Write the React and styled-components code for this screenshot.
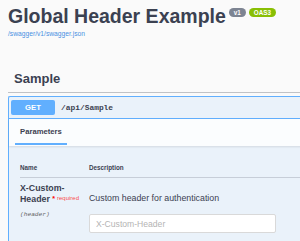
import styled, { createGlobalStyle } from "styled-components";

const GlobalStyle = createGlobalStyle`
    html, body {
        margin: 0;
        padding: 0;
        overflow: hidden;
        background: #fafafa;
        font-family: "Liberation Sans", Arial, sans-serif;
        color: #3b4151;
    }
`;

const Page = styled.div`
    width: 360px;
    padding: 0 0 0 8px;
    box-sizing: border-box;
`;

const Info = styled.div`
    padding-top: 6px;
    height: 60px;
    box-sizing: border-box;
`;

const Title = styled.h2`
    margin: 0;
    font-size: 19.5px;
    line-height: 20px;
    font-weight: 700;
    color: #3b4151;
    display: flex;
    align-items: flex-start;
`;

const Badge = styled.span`
    display: inline-block;
    margin: 2px 0 0 3px;
    padding: 0 5px;
    height: 9px;
    line-height: 9.5px;
    border-radius: 6px;
    font-size: 6.3px;
    font-weight: 700;
    color: #fff;
    background: ${p => p.$color};
`;

const Url = styled.a`
    display: block;
    margin-top: 4px;
    font-size: 6.7px;
    color: #4990e2;
    text-decoration: none;
`;

const TagHeading = styled.h3`
    margin: 0;
    padding: 10px 0 0 6px;
    height: 33px;
    box-sizing: border-box;
    font-size: 13px;
    line-height: 18px;
    font-weight: 700;
    color: #3b4151;
    border-bottom: 1px solid rgba(59, 65, 81, 0.3);
`;

const OpBlock = styled.div`
    margin-top: 3px;
    border: 1px solid #61affe;
    border-right: none;
    border-radius: 2px 0 0 2px;
    background: rgba(97, 175, 254, 0.1);
`;

const Summary = styled.div`
    display: flex;
    align-items: center;
    padding: 0 2px;
    height: 22px;
    box-sizing: border-box;
    border-bottom: 1px solid #61affe;
`;

const Method = styled.span`
    width: 44px;
    height: 15px;
    line-height: 15px;
    text-align: center;
    border-radius: 2px;
    background: #61affe;
    color: #fff;
    font-size: 7.7px;
    font-weight: 700;
`;

const Path = styled.span`
    padding-left: 6px;
    font-family: "Liberation Mono", monospace;
    font-size: 7.9px;
    font-weight: 700;
    color: #3b4151;
`;

const SectionHeader = styled.div`
    height: 27px;
    padding-left: 6px;
    box-sizing: border-box;
    display: flex;
    align-items: flex-end;
    background: rgba(255, 255, 255, 0.8);
    box-shadow: 0 1px 2px rgba(0, 0, 0, 0.1);
`;

const Tab = styled.div`
    padding: 0 5px 7px;
    font-size: 7.7px;
    font-weight: 700;
    line-height: 8px;
    border-bottom: 2px solid #61affe;
    margin-bottom: 1px;
`;

const TableWrap = styled.div`
    padding: 11px 0 11px 11px;
`;

const Row = styled.div`
    display: grid;
    grid-template-columns: 69px 1fr;
    border-bottom: ${p => (p.$head ? "1px solid rgba(59, 65, 81, 0.2)" : "none")};
    padding: ${p => (p.$head ? "7px 0 5px" : "5px 0")};
`;

const HeadCell = styled.div`
    font-size: 6.3px;
    font-weight: 700;
    line-height: 8px;
`;

const ParamName = styled.div`
    font-size: 8.8px;
    font-weight: 700;
    line-height: 10.5px;
    white-space: nowrap;
`;

const Required = styled.span`
    position: relative;
    top: -2px;
    margin-left: 2px;
    font-size: 6px;
    font-weight: 400;
    color: rgba(255, 0, 0, 0.75);
`;

const Star = styled.span`
    position: relative;
    top: -1px;
    font-size: 7px;
    font-weight: 700;
    color: red;
`;

const ParamIn = styled.div`
    margin-top: 6px;
    font-family: "Liberation Mono", monospace;
    font-style: italic;
    font-size: 6.2px;
    color: #666;
`;

const Desc = styled.div`
    padding-top: 10px;
    font-size: 8.8px;
    line-height: 11px;
`;

const Input = styled.input`
    display: block;
    margin-top: 10px;
    width: 187px;
    height: 19px;
    box-sizing: border-box;
    padding: 0 6px;
    border: 1px solid #d9d9d9;
    border-radius: 2px;
    background: #fff;
    font-family: "Liberation Sans", Arial, sans-serif;
    font-size: 8.6px;
    outline: none;
    &::placeholder {
        color: #b4b4b4;
    }
`;

export default function App() {
    return (
        <Page>
            <GlobalStyle />
            <Info>
                <Title>
                    Global Header Example
                    <Badge $color="#7d8492">v1</Badge>
                    <Badge $color="#89bf04">OAS3</Badge>
                </Title>
                <Url href="#">/swagger/v1/swagger.json</Url>
            </Info>
            <TagHeading>Sample</TagHeading>
            <OpBlock>
                <Summary>
                    <Method>GET</Method>
                    <Path>/api/Sample</Path>
                </Summary>
                <SectionHeader>
                    <Tab>Parameters</Tab>
                </SectionHeader>
                <TableWrap>
                    <Row $head>
                        <HeadCell>Name</HeadCell>
                        <HeadCell>Description</HeadCell>
                    </Row>
                    <Row>
                        <div>
                            <ParamName>
                                X-Custom-<br />Header <Star>*</Star><Required>required</Required>
                            </ParamName>
                            <ParamIn>(header)</ParamIn>
                        </div>
                        <div>
                            <Desc>Custom header for authentication</Desc>
                            <Input placeholder="X-Custom-Header" />
                        </div>
                    </Row>
                </TableWrap>
            </OpBlock>
        </Page>
    );
}
